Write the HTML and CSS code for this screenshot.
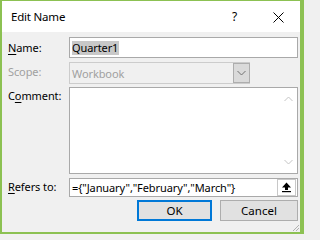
FILE: index.html
```html
<!DOCTYPE html>
<html>
<head>
<meta charset="utf-8">
<link rel="stylesheet" href="styles.css">
</head>
<body>
<div class="window">
  <div class="titlebar">
    <span class="title">Edit Name</span>
    <span class="help">?</span>
    <span class="close"><svg width="11" height="11" viewBox="0 0 11 11"><path d="M0.5 0.5 L10.5 10.5 M10.5 0.5 L0.5 10.5" stroke="#000" stroke-width="1"/></svg></span>
  </div>
  <div class="content">
    <div class="form">
      <label class="lbl row-name"><u>N</u>ame:</label>
      <div class="field input"><span class="sel">Quarter1</span></div>

      <label class="lbl disabled">Scope:</label>
      <div class="field select">
        <span class="seltext">Workbook</span>
        <span class="ddbtn"><svg width="9" height="6" viewBox="0 0 9 6"><path d="M0.5 1 L4.5 5 L8.5 1" fill="none" stroke="#707070" stroke-width="1"/></svg></span>
      </div>

      <label class="lbl top">C<u>o</u>mment:</label>
      <div class="field textarea">
        <div class="tbody"></div>
        <div class="scroll">
          <svg width="9" height="6" viewBox="0 0 9 6"><path d="M0.5 5 L4.5 1 L8.5 5" fill="none" stroke="#c4c4c4" stroke-width="1"/></svg>
          <svg width="9" height="6" viewBox="0 0 9 6"><path d="M0.5 1 L4.5 5 L8.5 1" fill="none" stroke="#c4c4c4" stroke-width="1"/></svg>
        </div>
      </div>

      <label class="lbl"><u>R</u>efers to:</label>
      <div class="field input refers">
        <span class="reftext">={"January","February","March"}</span>
        <span class="collapse"><svg width="11" height="11" viewBox="0 0 11 11"><path d="M5.5 0.5 L10 5.5 L7 5.5 L7 8 L4 8 L4 5.5 L1 5.5 Z" fill="#000"/><rect x="1" y="9" width="9" height="1.2" fill="#000"/></svg></span>
      </div>

      <div class="buttons">
        <button class="btn default">OK</button>
        <button class="btn">Cancel</button>
      </div>
    </div>
    <svg class="grip" width="8" height="8" viewBox="0 0 8 8"><path d="M7 1 L1 7 M7 4 L4 7" stroke="#b0b0b0" stroke-width="1"/></svg>
  </div>
</div>
</body>
</html>
```

FILE: styles.css
```css
html, body {
  margin: 0;
  padding: 0;
  background: #f0f0f0;
}
body {
  font-family: "Noto Sans", "Open Sans", sans-serif;
  font-size: 11px;
  letter-spacing: -0.1px;
  color: #000;
}
.window {
  width: 304px;
  height: 234px;
  box-sizing: border-box;
  border-style: solid;
  border-color: #8cc152;
  border-width: 1px 4px 2px 2px;
  display: flex;
  flex-direction: column;
  background: #f0f0f0;
}
.titlebar {
  height: 31px;
  flex: none;
  background: #fff;
  display: flex;
  align-items: center;
  position: relative;
}
.title {
  margin-left: 9px;
  font-size: 11.5px;
  letter-spacing: -0.2px;
  line-height: 16px;
  margin-top: 1px;
}
.help {
  margin-left: auto;
  font-size: 12px;
  line-height: 16px;
  margin-right: 36px;
  margin-top: 1px;
}
.close {
  display: flex;
  margin-right: 16px;
  margin-top: 1px;
}
.content {
  flex: 1;
  position: relative;
  padding: 5px 2px 0 6px;
}
.form {
  display: grid;
  grid-template-columns: 61px 1fr;
  grid-template-rows: 21px 22px 88px 19px 21px;
  row-gap: 3px;
}
.lbl {
  display: flex;
  align-items: center;
  line-height: 16px;
  white-space: nowrap;
}
.lbl u { text-decoration-thickness: 1px; text-underline-offset: 2px; }
.lbl.top {
  align-items: flex-start;
  padding-top: 1px;
  margin-top: 1px;
}
.lbl.disabled { color: #a0a0a0; }
.field {
  box-sizing: border-box;
  border: 1px solid #a9a9a9;
  background: #fff;
  display: flex;
  align-items: center;
}
.input {
  padding-left: 2px;
}
.sel {
  background: #c8c8c8;
  line-height: 14px;
  padding: 0 1px 0 0;
}
.select {
  width: 181px;
  background: #f0f0f0;
  border-color: #cccccc;
  color: #a0a0a0;
  padding-left: 2px;
  margin-top: 1px;
  margin-bottom: -1px;
}
.seltext { flex: 1; }
.ddbtn {
  width: 17px;
  height: 20px;
  box-sizing: border-box;
  margin-right: -1px;
  border: 1px solid #adadad;
  background: #dadada;
  display: flex;
  align-items: center;
  justify-content: center;
}
.textarea {
  align-items: stretch;
  margin-top: 1px;
}
.tbody { flex: 1; }
.scroll {
  width: 17px;
  display: flex;
  flex-direction: column;
  justify-content: space-between;
  align-items: center;
  padding: 8px 0 8px;
}
.refers {
  margin-top: 1px;
  margin-bottom: -1px;
}
.reftext { flex: 1; white-space: nowrap; }
.collapse {
  width: 19px;
  height: 17px;
  box-sizing: border-box;
  border: 1px solid #c8c8c8;
  background: #fff;
  display: flex;
  align-items: center;
  justify-content: center;
  margin-right: 1px;
}
.buttons {
  grid-column: 2;
  display: flex;
  justify-content: flex-end;
  gap: 8px;
  margin-top: 1px;
}
.btn {
  font-family: inherit;
  font-size: 11.5px;
  color: #000;
  height: 21px;
  box-sizing: border-box;
  background: #e1e1e1;
  border: 1px solid #adadad;
  padding: 0;
  width: 78px;
}
.btn.default {
  width: 75px;
  border: 2px solid #0078d7;
}
.grip {
  position: absolute;
  right: 0;
  bottom: 0;
}
```
